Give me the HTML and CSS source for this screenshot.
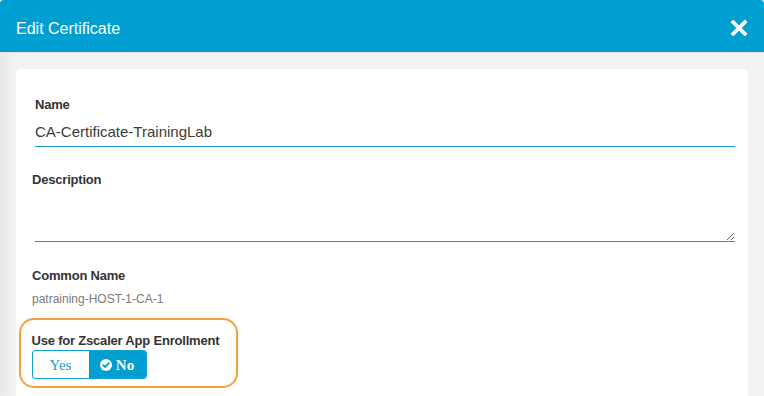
FILE: index.html
```html
<!DOCTYPE html>
<html>
<head>
<meta charset="utf-8">
<link rel="stylesheet" href="styles.css">
</head>
<body>
<div class="modal">
  <header class="modal-header">
    <h1 class="modal-title">Edit Certificate</h1>
    <button class="close" aria-label="Close">
      <svg width="18" height="18" viewBox="0 0 18 18"><path d="M3.2 1 L9 6.8 L14.8 1 L17 3.2 L11.2 9 L17 14.8 L14.8 17 L9 11.2 L3.2 17 L1 14.8 L6.8 9 L1 3.2 Z" fill="#fff" stroke="#fff" stroke-width="1" stroke-linejoin="round"/></svg>
    </button>
  </header>
  <main class="modal-body">
    <section class="card">
      <div class="field field-indent">
        <label class="label">Name</label>
        <input class="text-input" type="text" value="CA-Certificate-TrainingLab">
      </div>
      <div class="field field-desc">
        <label class="label">Description</label>
        <textarea class="text-area"></textarea>
      </div>
      <div class="field field-common">
        <label class="label">Common Name</label>
        <div class="static-value">patraining-HOST-1-CA-1</div>
      </div>
      <div class="field highlight">
        <label class="label">Use for Zscaler App Enrollment</label>
        <div class="toggle">
          <span class="toggle-opt">Yes</span>
          <span class="toggle-opt active">
            <svg class="check" width="12" height="12" viewBox="0 0 12 12"><circle cx="6" cy="6" r="6" fill="#fff"/><path d="M3.2 6.1 L5.2 8 L8.9 4.2" fill="none" stroke="#019fd1" stroke-width="1.8" stroke-linecap="round" stroke-linejoin="round"/></svg>No
          </span>
        </div>
      </div>
    </section>
  </main>
</div>
</body>
</html>
```

FILE: styles.css
```css
html, body {
  margin: 0;
  padding: 0;
}
body {
  width: 764px;
  height: 396px;
  overflow: hidden;
  background: #f3f3f3;
  font-family: "Liberation Sans", Arial, sans-serif;
  color: #333;
}
.modal {
  height: 396px;
  overflow: hidden;
  background: linear-gradient(to right, #e9e9e9 0px, #f2f2f2 16px, #f3f3f3 20px);
}
.modal-header {
  height: 53px;
  box-sizing: border-box;
  background: #009fd2;
  border-bottom: 1px solid #e2e2e2;
  border-radius: 4px 4px 0 0;
  display: flex;
  align-items: center;
  justify-content: space-between;
  padding: 0 16px 0 16px;
}
.modal-title {
  margin: 0;
  font-size: 16px;
  font-weight: normal;
  color: #fff;
  line-height: 20px;
  padding-top: 6px;
}
.close {
  border: 0;
  background: none;
  padding: 0;
  width: 18px;
  height: 18px;
  display: flex;
  margin-top: 4px;
}
.modal-body {
  padding: 16px 16px 0 16px;
}
.card {
  background: #fff;
  border-radius: 5px;
  padding: 28px 13px 40px 16px;
  height: 400px;
}
.field {
  display: flex;
  flex-direction: column;
}
.field-indent {
  padding-left: 3px;
}
.label {
  font-size: 13px;
  font-weight: bold;
  line-height: 16px;
  letter-spacing: -0.2px;
  color: #333;
}
.text-input {
  margin-top: 7px;
  border: 0;
  border-bottom: 1px solid #1a95c3;
  padding: 0 0 3px 0;
  font-family: "Liberation Sans", Arial, sans-serif;
  font-size: 15px;
  color: #3c3c3c;
  outline: none;
  line-height: 20px;
  box-sizing: border-box;
  height: 27px;
}
.field-desc {
  margin-top: 25px;
}
.text-area {
  margin-top: 6px;
  margin-left: 3px;
  border: 0;
  border-bottom: 1px solid #1a95c3;
  height: 47px;
  resize: vertical;
  outline: none;
  padding: 0;
  font-family: "Liberation Sans", Arial, sans-serif;
}
.field-common {
  margin-top: 26px;
}
.static-value {
  margin-top: 8px;
  font-size: 12px;
  line-height: 14px;
  color: #7a7a7a;
}
.highlight {
  margin-top: 12px;
  margin-left: -13px;
  width: fit-content;
  border: 2.5px solid #f5a03e;
  border-radius: 15px;
  padding: 13px 17px 7px 10.5px;
}
.toggle {
  margin-top: 1px;
  display: flex;
  width: 115px;
  height: 29px;
  box-sizing: border-box;
  border: 1px solid #109fd2;
  border-radius: 3px;
  overflow: hidden;
}
.toggle-opt {
  flex: 0 0 56px;
  display: flex;
  align-items: center;
  justify-content: center;
  font-family: "Liberation Serif", "Times New Roman", serif;
  font-size: 15px;
  color: #129fd0;
  padding-top: 1px;
}
.toggle-opt.active {
  flex: 1;
  background: #019fd1;
  color: #fff;
  font-weight: bold;
  gap: 4px;
}
.check {
  display: block;
}
```
